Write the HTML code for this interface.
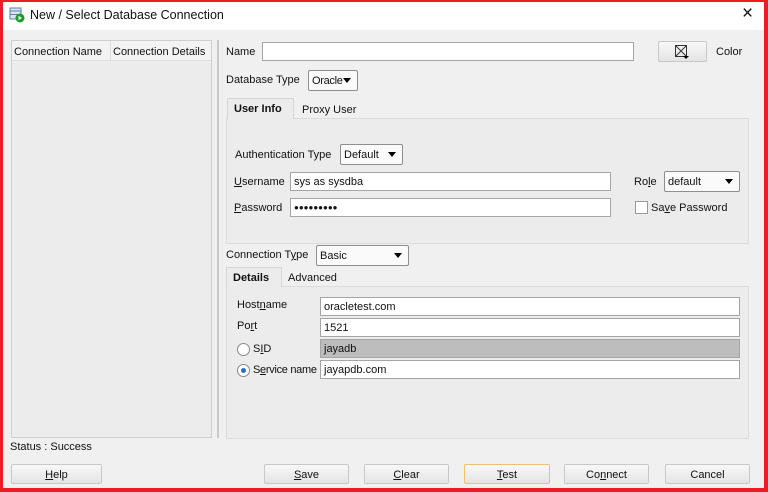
<!DOCTYPE html>
<html><head><meta charset="utf-8"><style>
*{box-sizing:border-box;margin:0;padding:0}
body{width:768px;height:492px;background:#ed1c24;position:relative;overflow:hidden;font-family:"Liberation Sans",sans-serif;font-size:11px;color:#111}
.a{position:absolute}
#win{left:3px;top:2px;width:761px;height:486px;background:#f0f0f0}
#title{left:3px;top:2px;width:761px;height:28px;background:#fff}
.t{position:absolute;white-space:nowrap}
.inp{position:absolute;background:#fff;border:1px solid #a5a5a5;height:19px;padding:3px 3px;white-space:nowrap}
.sel{position:absolute;background:#fafafa;border:1px solid #8e8e8e;border-radius:2px;height:21px;padding:4px 3px;white-space:nowrap}
.sel:after{content:"";position:absolute;right:6px;top:7px;border-left:4px solid transparent;border-right:4px solid transparent;border-top:5px solid #000}
.btn{position:absolute;height:20px;border:1px solid #c8c8c8;border-radius:2px;background:linear-gradient(#f8f8f8,#e4e4e4);text-align:center;padding-top:4px}
.panel{position:absolute;border:1px solid #dcdcdc;background:#ececec}
.tab{position:absolute;border:1px solid #d6d6d6;border-bottom:none;background:#ececec;font-weight:bold;padding:4px 6px;height:20px}
.radio{position:absolute;width:13px;height:13px;border:1px solid #8a8a8a;border-radius:50%;background:#fff}
u{text-decoration:underline}
</style></head><body>
<div id="win" class="a"></div>
<div id="title" class="a"></div>
<svg class="a" style="left:9px;top:7px" width="16" height="16" viewBox="0 0 16 16"><rect x="1" y="1" width="11" height="11" fill="#dbe6f4" stroke="#5a7fb0"/><line x1="1" y1="4" x2="12" y2="4" stroke="#5a7fb0"/><line x1="1" y1="7.5" x2="12" y2="7.5" stroke="#5a7fb0"/><circle cx="11" cy="11" r="4.5" fill="#1e9b2d"/><path d="M9.5 8.8 L13 11 L9.5 13.2Z" fill="#fff"/></svg>
<div class="t" style="left:30px;top:8px;font-size:12.5px">New / Select Database Connection</div>
<div class="t" style="left:742px;top:3px;font-size:19px;font-weight:300">×</div>

<div class="a" style="left:11px;top:40px;width:201px;height:398px;border:1px solid #cfcfcf;background:#ececec"></div>
<div class="a" style="left:12px;top:41px;width:199px;height:20px;background:#f3f3f3;border-bottom:1px solid #ddd"></div>
<div class="a" style="left:110px;top:41px;width:1px;height:20px;background:#ddd"></div>
<div class="t" style="left:14px;top:46px">Connection Name</div>
<div class="t" style="left:113px;top:46px">Connection Details</div>
<div class="a" style="left:217px;top:40px;width:2px;height:398px;background:#c9c9c9"></div>

<div class="t" style="left:226px;top:46px">Name</div>
<div class="inp" style="left:262px;top:42px;width:372px"></div>
<div class="btn" style="left:658px;top:41px;width:49px;height:21px"></div>
<svg class="a" style="left:672px;top:44px" width="20" height="16" viewBox="0 0 20 16"><rect x="3.5" y="1.5" width="11" height="11" fill="none" stroke="#333"/><path d="M3.5 1.5 L14.5 12.5 M14.5 1.5 L3.5 12.5" stroke="#333"/><path d="M11 12 L17 12 L14 15Z" fill="#000"/></svg>
<div class="t" style="left:716px;top:46px">Color</div>

<div class="t" style="left:226px;top:74px">Database Type</div>
<div class="sel" style="left:308px;top:70px;width:50px;padding-right:14px;letter-spacing:-0.3px">Oracle</div>

<div class="panel" style="left:226px;top:118px;width:523px;height:126px"></div>
<div class="tab" style="left:227px;top:98px;width:67px;height:21px">User Info</div>
<div class="t" style="left:302px;top:104px">Proxy User</div>

<div class="t" style="left:235px;top:149px">Authentication Type</div>
<div class="sel" style="left:340px;top:144px;width:63px">Default</div>
<div class="t" style="left:234px;top:176px"><u>U</u>sername</div>
<div class="inp" style="left:290px;top:172px;width:321px">sys as sysdba</div>
<div class="t" style="left:634px;top:176px">Ro<u>l</u>e</div>
<div class="sel" style="left:664px;top:171px;width:76px">default</div>
<div class="t" style="left:234px;top:202px"><u>P</u>assword</div>
<div class="inp" style="left:290px;top:198px;width:321px;font-size:8px;padding-top:4px;font-weight:bold">●●●●●●●●●</div>
<div class="a" style="left:635px;top:201px;width:13px;height:13px;border:1px solid #999;background:#fff"></div>
<div class="t" style="left:651px;top:202px">Sa<u>v</u>e Password</div>

<div class="t" style="left:226px;top:249px">Connection T<u>y</u>pe</div>
<div class="sel" style="left:316px;top:245px;width:93px">Basic</div>

<div class="panel" style="left:226px;top:286px;width:523px;height:153px"></div>
<div class="tab" style="left:226px;top:267px;width:56px">Details</div>
<div class="t" style="left:288px;top:272px">Advanced</div>

<div class="t" style="left:237px;top:299px">Host<u>n</u>ame</div>
<div class="inp" style="left:320px;top:297px;width:420px">oracletest.com</div>
<div class="t" style="left:237px;top:320px">Po<u>r</u>t</div>
<div class="inp" style="left:320px;top:318px;width:420px">1521</div>
<div class="radio" style="left:237px;top:343px"></div>
<div class="t" style="left:253px;top:343px">S<u>I</u>D</div>
<div class="inp" style="left:320px;top:339px;width:420px;background:#bdbdbd">jayadb</div>
<div class="radio" style="left:237px;top:364px"><div class="a" style="left:3px;top:3px;width:5px;height:5px;border-radius:50%;background:#2a6fd0"></div></div>
<div class="t" style="left:253px;top:364px;letter-spacing:-0.3px">S<u>e</u>rvice name</div>
<div class="inp" style="left:320px;top:360px;width:420px">jayapdb.com</div>

<div class="t" style="left:10px;top:441px">Status : Success</div>
<div class="btn" style="left:11px;top:464px;width:91px"><u>H</u>elp</div>
<div class="btn" style="left:264px;top:464px;width:85px"><u>S</u>ave</div>
<div class="btn" style="left:364px;top:464px;width:85px"><u>C</u>lear</div>
<div class="btn" style="left:464px;top:464px;width:86px;border-color:#f0c070"><u>T</u>est</div>
<div class="btn" style="left:564px;top:464px;width:85px">Co<u>n</u>nect</div>
<div class="btn" style="left:665px;top:464px;width:85px">Cancel</div>
</body></html>
